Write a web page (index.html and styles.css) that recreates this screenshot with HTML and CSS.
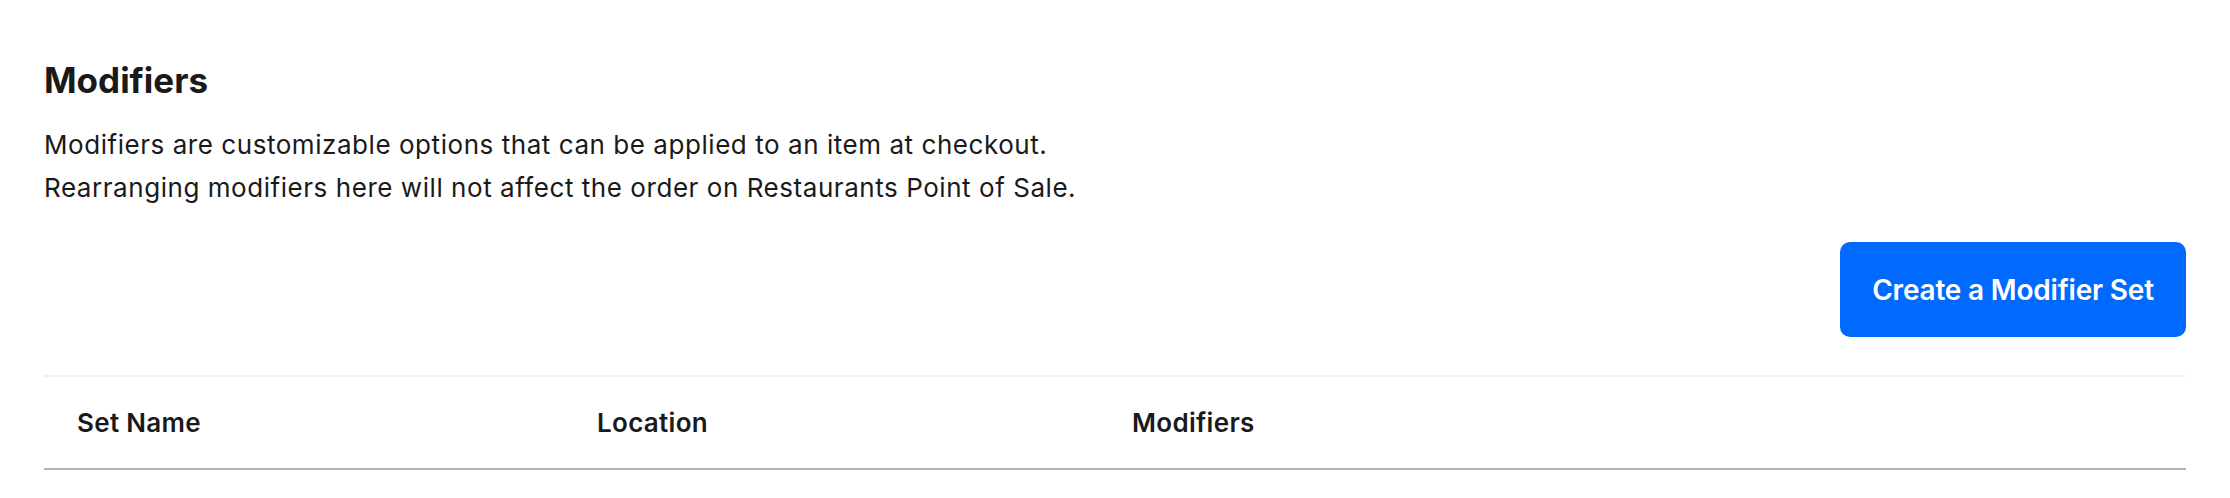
FILE: index.html
```html
<!DOCTYPE html>
<html lang="en">
<head>
<meta charset="utf-8">
<title>Modifiers</title>
<link rel="stylesheet" href="styles.css">
</head>
<body>
<main class="page">
  <header class="intro">
    <h1 class="title">Modifiers</h1>
    <p class="desc">Modifiers are customizable options that can be applied to an item at checkout.</p>
    <p class="desc">Rearranging modifiers here will not affect the order on Restaurants Point of Sale.</p>
  </header>
  <div class="actions">
    <button class="btn-primary" type="button">Create a Modifier Set</button>
  </div>
  <div class="table">
    <div class="thead">
      <div class="th">Set Name</div>
      <div class="th">Location</div>
      <div class="th">Modifiers</div>
    </div>
  </div>
</main>
</body>
</html>
```
FILE: styles.css
```css
* { box-sizing: border-box; }
html, body { margin: 0; padding: 0; background: #ffffff; }
body {
  font-family: "Inter", "Liberation Sans", sans-serif;
  color: #1a1a1a;
}
.page {
  padding: 0 44px;
}
.intro {
  padding-top: 58px;
}
.title {
  margin: 0 0 21px 0;
  font-size: 35px;
  line-height: 44px;
  font-weight: 700;
  letter-spacing: 0;
}
.desc {
  margin: 0;
  font-size: 26px;
  line-height: 43px;
  font-weight: 400;
  letter-spacing: 0.55px;
}
.actions {
  display: flex;
  justify-content: flex-end;
  padding-top: 33px;
}
.btn-primary {
  width: 346px;
  height: 95px;
  border: none;
  border-radius: 10px;
  background: #006aff;
  color: #ffffff;
  font-family: inherit;
  font-size: 28px;
  font-weight: 600;
  letter-spacing: -0.2px;
  cursor: pointer;
}
.table {
  margin-top: 38px;
  border-top: 2px solid #f0f0f0;
}
.thead {
  display: grid;
  grid-template-columns: 520px 535px 1fr;
  height: 93px;
  align-items: center;
  border-bottom: 2px solid #b3b3b3;
}
.th {
  padding: 0 33px;
  font-size: 26px;
  font-weight: 600;
  letter-spacing: 0.3px;
}
```
